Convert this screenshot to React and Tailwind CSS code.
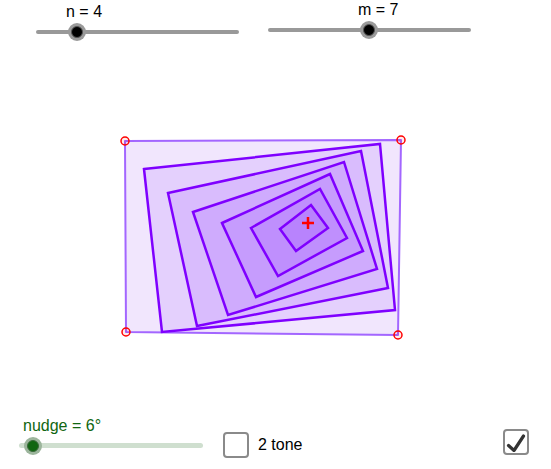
import React from "react";

const FONT = { fontFamily: '"Liberation Sans", Arial, sans-serif' };

function Knob({ left, dark }) {
  return (
    <div
      className={`absolute top-0 w-[18px] h-[18px] rounded-full flex items-center justify-center ${dark ? "bg-[#9cb59c]" : "bg-[#9a9a9a]"}`}
      style={{ left }}
    >
      <div className={`w-[12px] h-[12px] rounded-full border ${dark ? "bg-[#116611] border-[#3a6a3a]" : "bg-black border-[#555]"}`} />
    </div>
  );
}

const polys = [
  [[144, 169], [380, 144], [395, 310], [162, 332]],
  [[168, 193], [361, 151], [388, 288], [197, 326]],
  [[193, 212], [344, 162], [377, 269], [228, 315]],
  [[222, 223], [330, 174], [363, 251], [256, 297]],
  [[251, 228], [320, 189], [347, 238], [278, 276]],
  [[280, 229], [311, 205], [328, 228], [296, 251]],
];

const outer = [[125, 141], [401, 140], [398, 335], [126, 332]];
const pts = (p) => p.map((q) => q.join(",")).join(" ");

export default function App() {
  return (
    <div className="w-[551px] h-[469px] bg-white flex flex-col text-[16px] text-black overflow-hidden" style={FONT}>
      {/* top sliders */}
      <div className="h-[50px] flex items-start">
        <div className="ml-[36px] w-[203px] flex flex-col pt-[3px]">
          <div className="pl-[30px] h-[18px] leading-[18px]">n = 4</div>
          <div className="relative h-[18px] mt-[2px]">
            <div className="absolute left-0 right-0 top-[7px] h-[4px] rounded-full bg-[#999999]" />
            <Knob left={77 - 36 - 9} />
          </div>
        </div>
        <div className="ml-[29px] w-[203px] flex flex-col pt-[1px]">
          <div className="pl-[90px] h-[18px] leading-[18px]">m = 7</div>
          <div className="relative h-[18px] mt-[2px]">
            <div className="absolute left-0 right-0 top-[7px] h-[4px] rounded-full bg-[#999999]" />
            <Knob left={369 - 268 - 9} />
          </div>
        </div>
      </div>

      {/* drawing */}
      <svg width="551" height="360" viewBox="0 50 551 360" className="block">
        <polygon points={pts(outer)} fill="#f1e6fd" stroke="#a366ff" strokeWidth="2" strokeLinejoin="round" />
        {polys.map((p, i) => (
          <polygon
            key={i}
            points={pts(p)}
            fill="#8c33ff"
            fillOpacity="0.12"
            stroke="#7f00ff"
            strokeWidth="2.5"
            strokeLinejoin="miter"
          />
        ))}
        {outer.map(([x, y], i) => (
          <circle key={i} cx={x} cy={y} r="4" fill="#ff0000" fillOpacity="0.08" stroke="#ff0000" strokeWidth="1.5" />
        ))}
        <g stroke="#ff0000" strokeWidth="2.5">
          <line x1="302" y1="223" x2="314" y2="223" />
          <line x1="308" y1="217" x2="308" y2="229" />
        </g>
      </svg>

      {/* bottom row */}
      <div className="flex items-start h-[59px]">
        <div className="ml-[19px] w-[184px] flex flex-col pt-[7px]">
          <div className="pl-[4px] h-[18px] leading-[18px] text-[#116611]">nudge = 6°</div>
          <div className="relative h-[18px] mt-[2px]">
            <div className="absolute left-0 right-0 top-[6px] h-[5px] rounded-full bg-[#cfdfcf]" />
            <Knob left={33 - 19 - 9} dark />
          </div>
        </div>
        <div className="ml-[20px] mt-[22px] w-[26px] h-[26px] rounded-[4px] border-2 border-[#8a8a8a] bg-white" />
        <div className="ml-[9px] mt-[26px] h-[18px] leading-[18px]">2 tone</div>
        <div className="ml-auto mr-[22px] mt-[19px] w-[26px] h-[26px] rounded-[4px] border-2 border-[#8a8a8a] bg-white flex items-center justify-center">
          <svg width="20" height="20" viewBox="0 0 20 20">
            <path d="M2.5 13.5 L8 18.5 L17.5 4" fill="none" stroke="#333333" strokeWidth="3.2" strokeLinecap="round" strokeLinejoin="round" />
          </svg>
        </div>
      </div>
    </div>
  );
}
